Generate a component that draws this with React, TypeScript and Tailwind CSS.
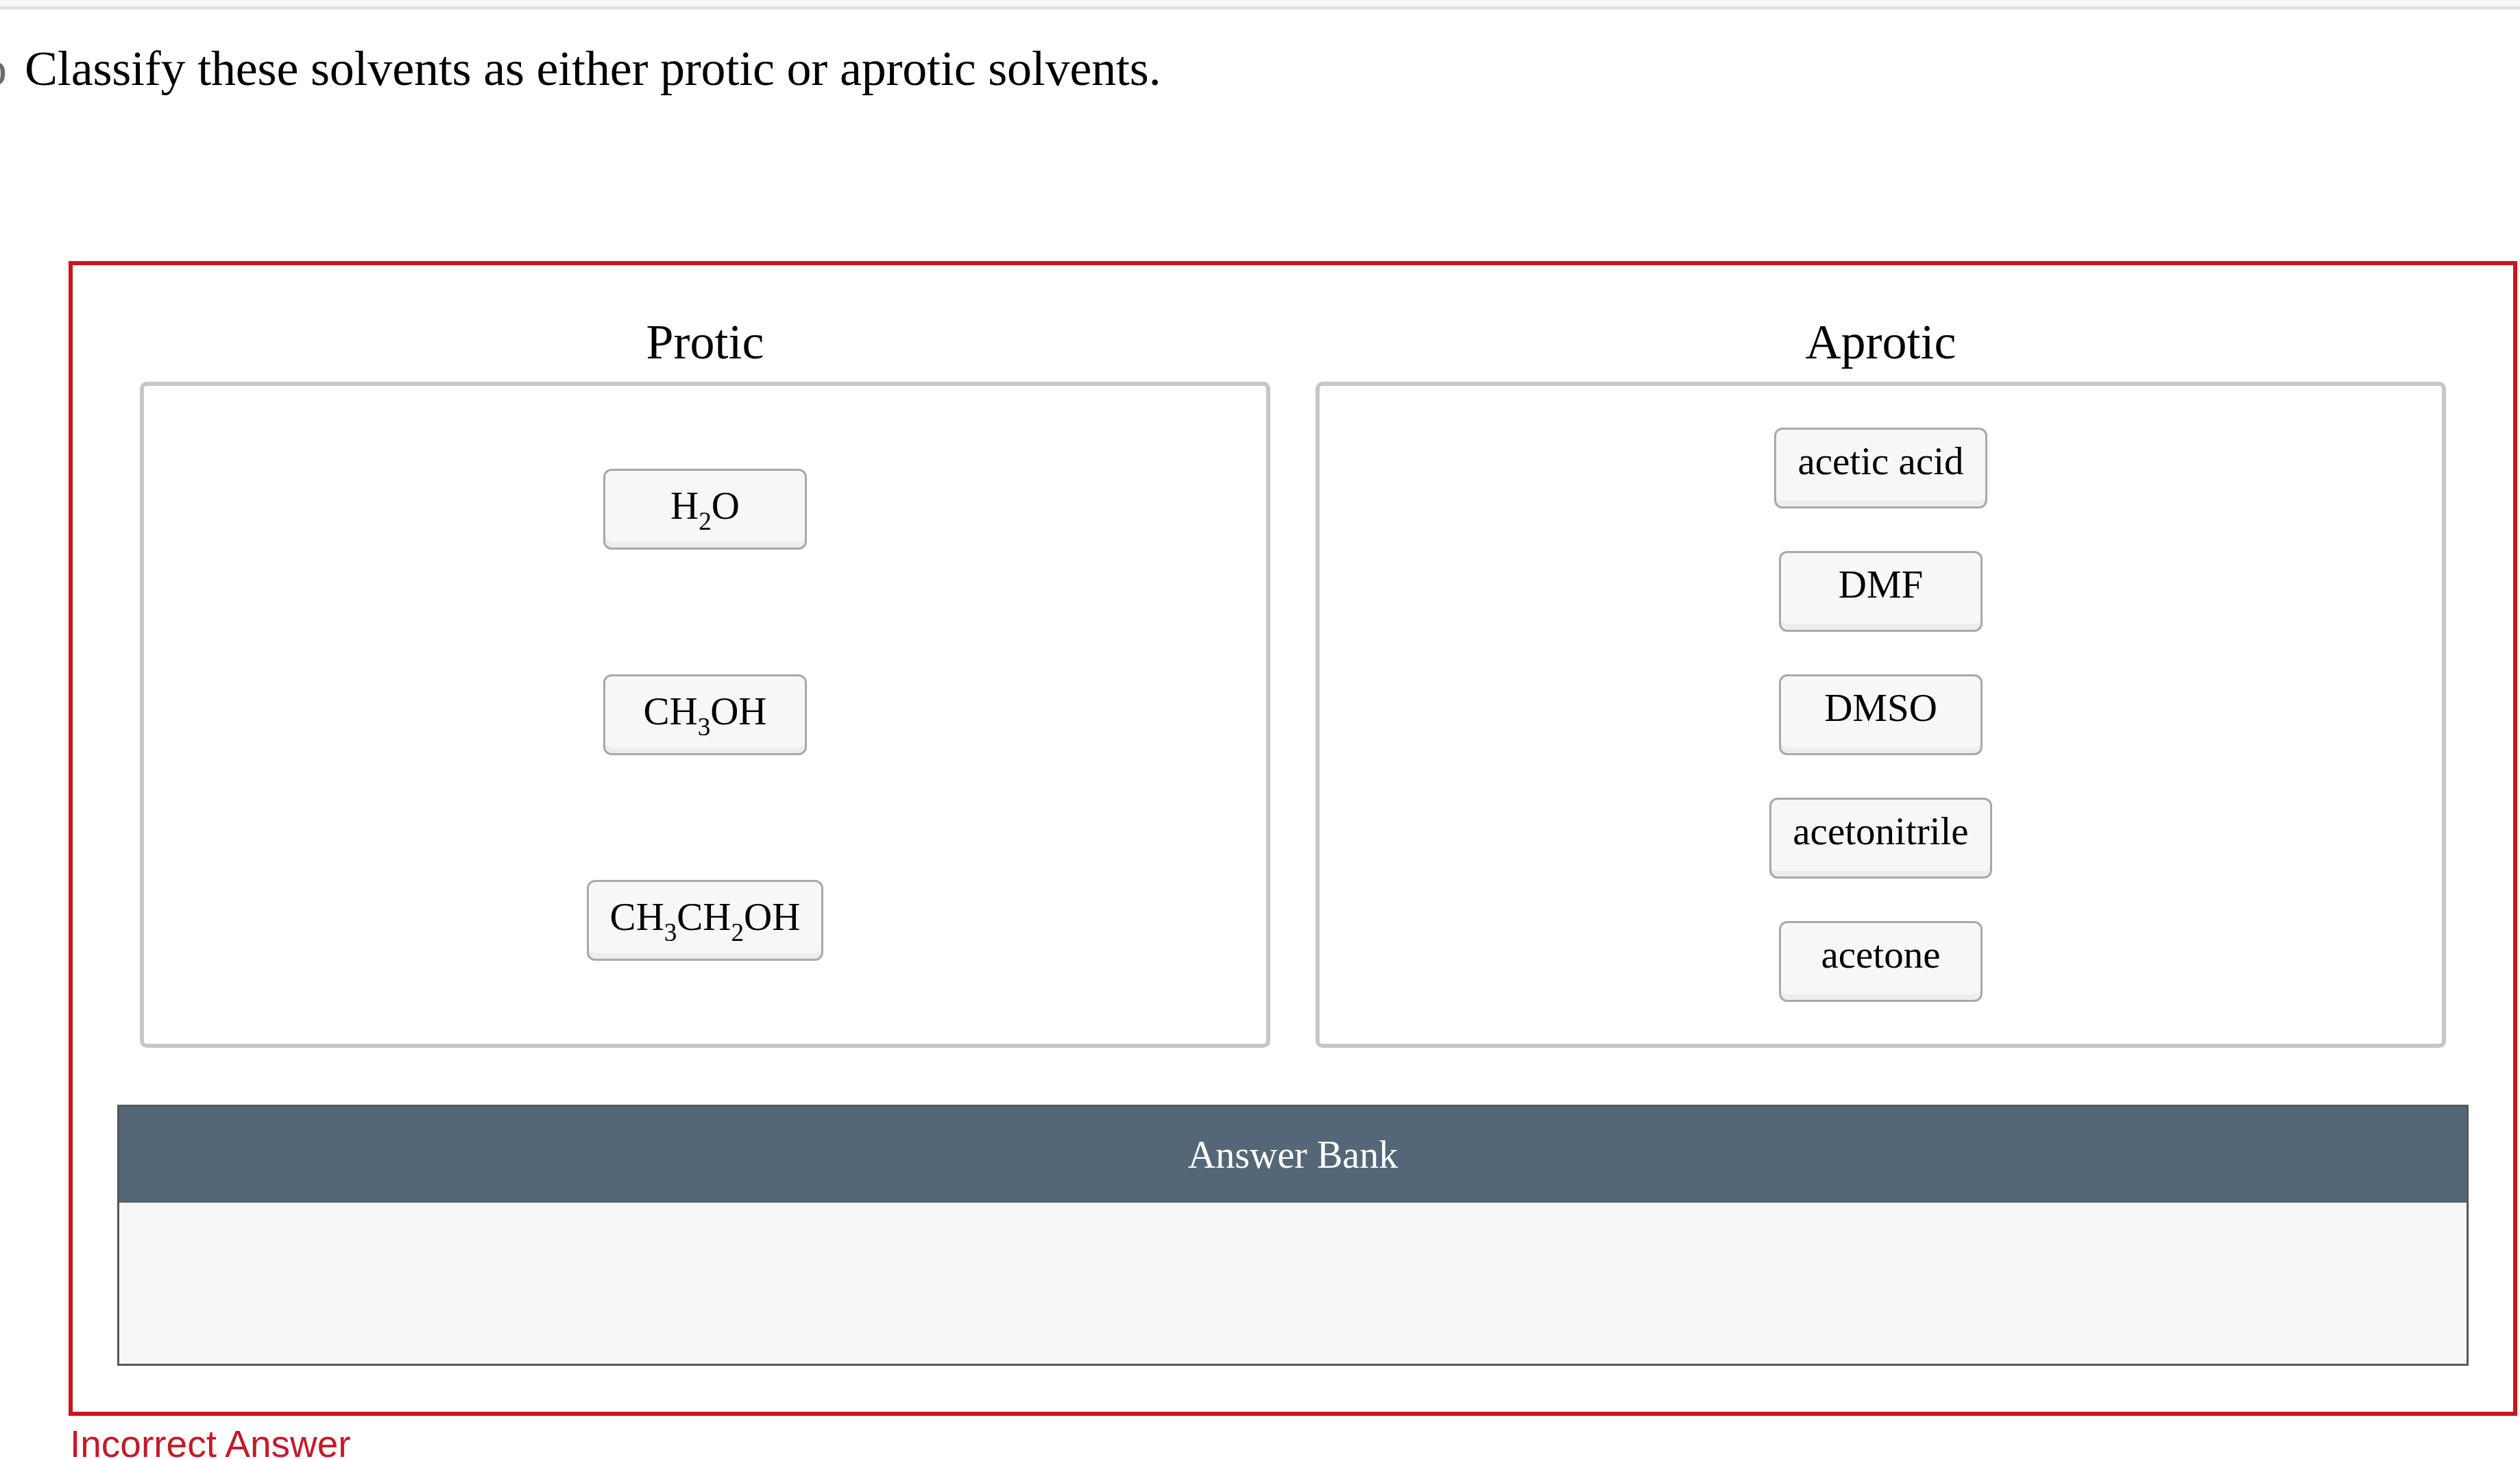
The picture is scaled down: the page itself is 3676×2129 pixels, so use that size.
import React from "react";

type Chip = { key: string; label: React.ReactNode; formula?: boolean };

const Sub = ({ children }: { children: React.ReactNode }) => (
  <sub className="text-[0.65em] -bottom-[0.42em]">{children}</sub>
);

const protic: Chip[] = [
  { key: "h2o", label: <>H<Sub>2</Sub>O</>, formula: true },
  { key: "ch3oh", label: <>CH<Sub>3</Sub>OH</>, formula: true },
  { key: "ethanol", label: <>CH<Sub>3</Sub>CH<Sub>2</Sub>OH</>, formula: true },
];

const aprotic: Chip[] = [
  { key: "acetic", label: "acetic acid" },
  { key: "dmf", label: "DMF" },
  { key: "dmso", label: "DMSO" },
  { key: "acetonitrile", label: "acetonitrile" },
  { key: "acetone", label: "acetone" },
];

function Token({ label, formula }: { label: React.ReactNode; formula?: boolean }) {
  return (
    <div
      className={`flex h-[118px] min-w-[297px] justify-center whitespace-nowrap rounded-[12px] border-[3px] border-[#a9a9a9] bg-[#f7f7f7] px-[31px] text-[57px] leading-[66px] shadow-[inset_0_-8px_0_#ededed] ${
        formula ? "pt-[18px]" : "pt-[13px]"
      }`}
    >
      <span>{label}</span>
    </div>
  );
}

function Column({ title, items, spread }: { title: string; items: Chip[]; spread: boolean }) {
  return (
    <div className="flex flex-col">
      <h2 className="text-center text-[72px] leading-[83px] font-normal">{title}</h2>
      <div
        className={`mt-[16px] flex h-[972px] flex-col items-center justify-center rounded-[10px] border-[6px] border-[#c6c6c6] bg-white ${
          spread ? "gap-[182px]" : "gap-[62px]"
        }`}
      >
        {items.map((c) => (
          <Token key={c.key} label={c.label} formula={c.formula} />
        ))}
      </div>
    </div>
  );
}

export default function App() {
  return (
    <div className="min-h-screen w-[3676px] overflow-hidden bg-white font-['Liberation_Serif','Times_New_Roman',serif] text-black">
      {/* top chrome strip */}
      <div className="h-[9px] bg-[#f7f7f7]" />
      <div className="h-[5px] bg-[#e0e0e0]" />

      {/* question */}
      <div className="mt-[45px] flex items-baseline text-[72px] leading-[83px]">
        <span className="-ml-[26px] w-[36px] text-[#6b6b6b]">o</span>
        <span className="ml-[26px] tracking-[-0.2px]">Classify these solvents as either protic or aprotic solvents.</span>
      </div>

      {/* sorting widget */}
      <div className="ml-[100px] mt-[239px] w-[3572px] border-[6px] border-[#c8161d] pt-[71px] pb-[67px]">
        <div className="grid grid-cols-2 gap-[66px] px-[98px]">
          <Column title="Protic" items={protic} spread />
          <Column title="Aprotic" items={aprotic} spread={false} />
        </div>

        <div className="mx-[65px] mt-[83px] border-[3px] border-[#575757]">
          <div className="bg-[#546778] text-center text-[56px] leading-[140px] text-white">Answer Bank</div>
          <div className="h-[235px] bg-[#f7f7f7]" />
        </div>
      </div>

      <p className="ml-[102px] mt-[19px] font-['Liberation_Sans',Arial,sans-serif] text-[55px] leading-[44px] text-[#c41a2a]">
        Incorrect Answer
      </p>
    </div>
  );
}
